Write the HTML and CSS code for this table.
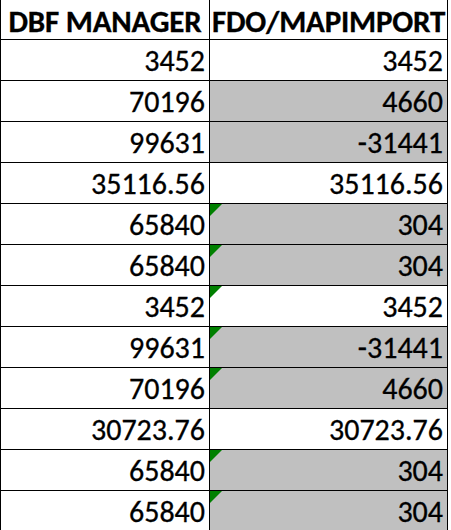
FILE: index.html
```html
<!DOCTYPE html>
<html>
<head>
<meta charset="utf-8">
<link rel="stylesheet" href="styles.css">
</head>
<body>
<div class="sheet">
  <div class="cell head">DBF MANAGER</div>
  <div class="cell head">FDO/MAPIMPORT</div>

  <div class="cell">3452</div>
  <div class="cell">3452</div>

  <div class="cell">70196</div>
  <div class="cell gray">4660</div>

  <div class="cell">99631</div>
  <div class="cell gray">-31441</div>

  <div class="cell">35116.56</div>
  <div class="cell">35116.56</div>

  <div class="cell">65840</div>
  <div class="cell gray flag">304</div>

  <div class="cell">65840</div>
  <div class="cell gray flag">304</div>

  <div class="cell">3452</div>
  <div class="cell flag">3452</div>

  <div class="cell">99631</div>
  <div class="cell gray flag">-31441</div>

  <div class="cell">70196</div>
  <div class="cell gray flag">4660</div>

  <div class="cell">30723.76</div>
  <div class="cell">30723.76</div>

  <div class="cell">65840</div>
  <div class="cell gray flag">304</div>

  <div class="cell">65840</div>
  <div class="cell gray flag">304</div>
</div>
</body>
</html>
```

FILE: styles.css
```css
html, body {
  margin: 0;
  padding: 0;
  background: #ffffff;
}

.sheet {
  display: grid;
  grid-template-columns: 209px 237px;
  grid-template-rows: 40px;
  grid-auto-rows: 41px;
  width: max-content;
  border-left: 1px solid #000;
  border-right: 1px solid #000;
  font-family: Carlito, Lato, "Liberation Sans", sans-serif;
  color: #000;
}

.cell {
  position: relative;
  border-bottom: 1px solid #000;
  display: flex;
  align-items: center;
  justify-content: flex-end;
  padding: 2px 4px 0 0;
  font-size: 30px;
  line-height: 1;
  overflow: hidden;
  white-space: nowrap;
  -webkit-text-stroke: 0.3px #000;
}

.cell:nth-child(odd) {
  border-right: 1px solid #000;
}

.head {
  justify-content: center;
  padding: 3px 0 0 0;
  font-weight: 900;
  font-size: 31px;
  letter-spacing: -0.2px;
}

.gray {
  background: #c0c0c0;
}

.flag::before {
  content: "";
  position: absolute;
  left: 0;
  top: 0;
  width: 12px;
  height: 12px;
  background: #008000;
  clip-path: polygon(0 0, 100% 0, 0 100%);
}
```
